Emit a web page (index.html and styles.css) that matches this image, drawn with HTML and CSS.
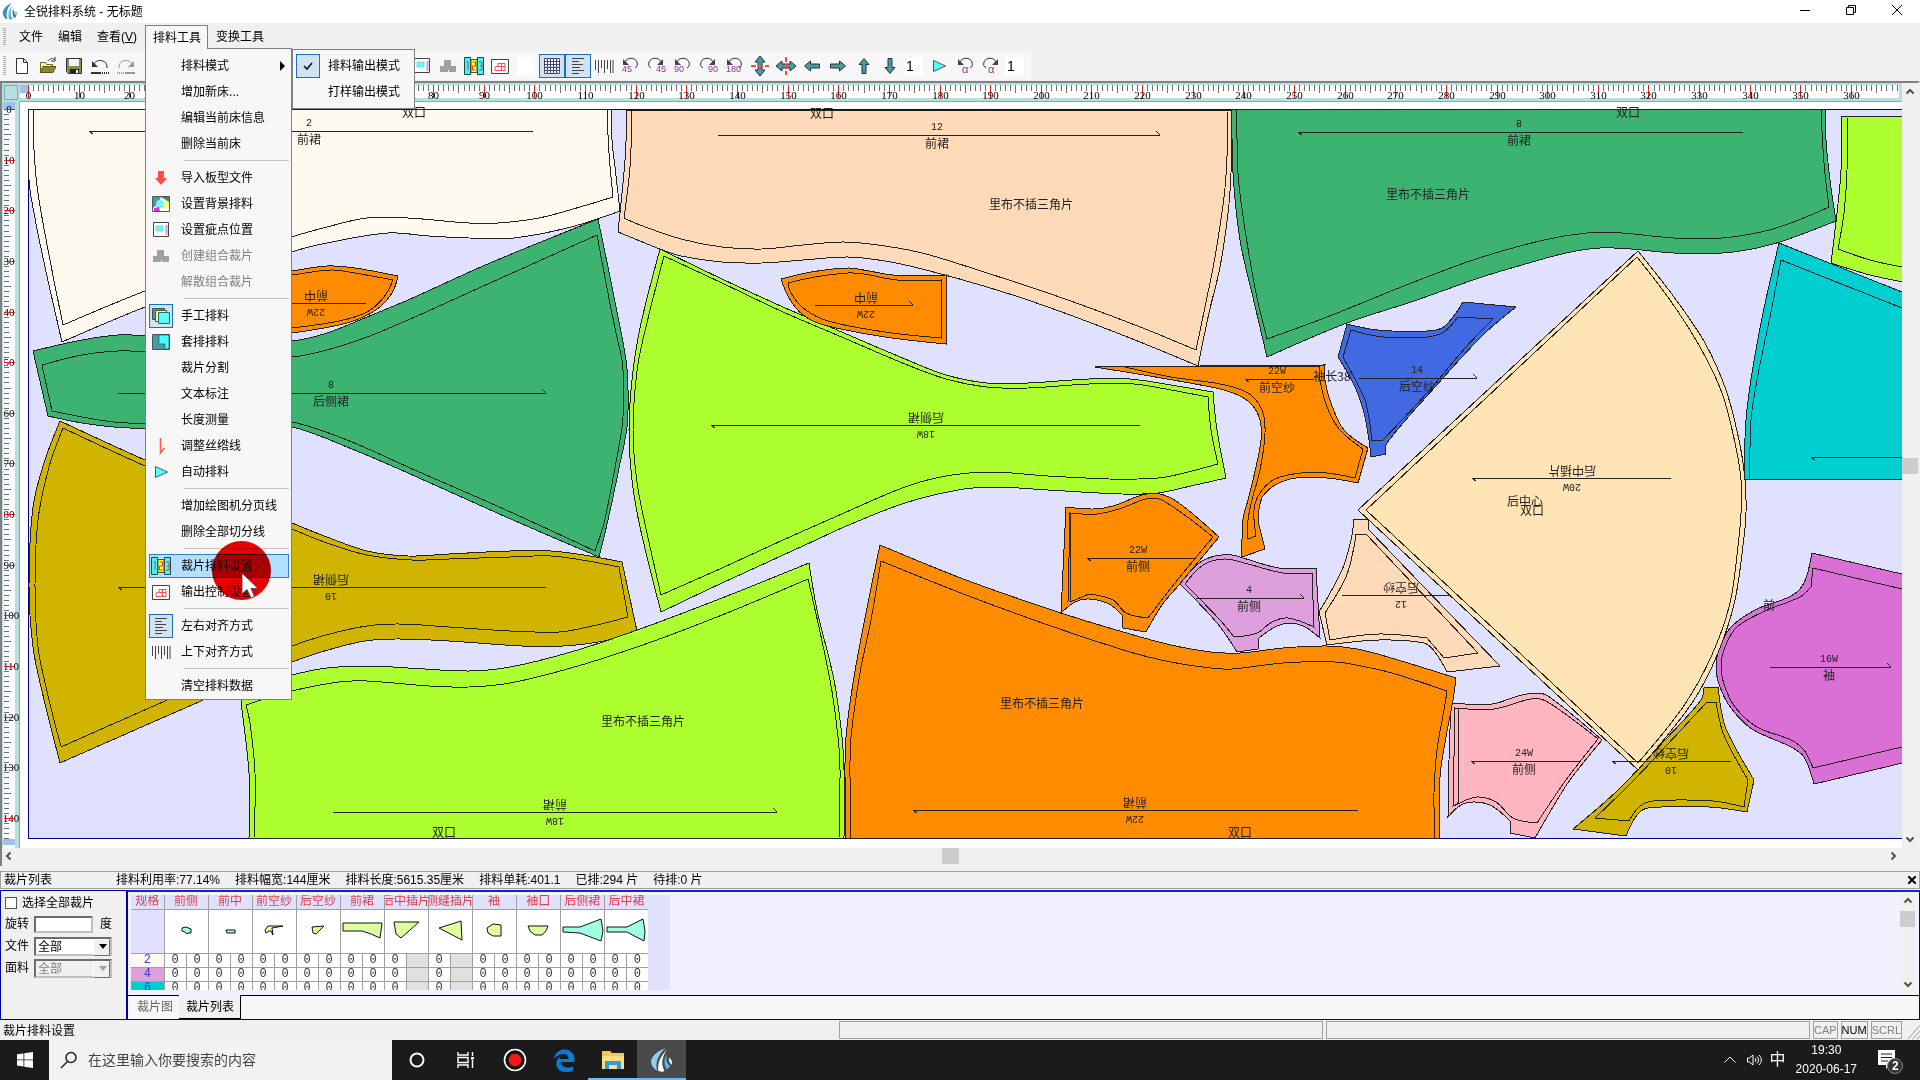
FILE: index.html
```html
<!doctype html>
<html lang="zh-CN">

<head>
    <meta charset="utf-8">
    <title>全锐排料系统 - 无标题</title>
    <link rel="stylesheet" href="styles.css">
</head>

<body>
    <!-- icon sprite -->
    <svg class="sprite" aria-hidden="true">
        <symbol id="i-logo" viewBox="0 0 18 20">
            <path d="M11 0C4 3 0 8 1 13c1 3 3 5 5 5C4 12 6 5 11 0z" fill="#3b8fc4" />
            <path d="M12 2C8 7 6 12 8 18c2 1 3 1 4 0C9 13 9 8 12 2z" fill="#5bb0dc" />
            <path d="M13 6c-2 4-1 8 1 11 1-1 2-2 2-3-2-2-3-5-3-8z" fill="#2a78b0" />
            <path d="M15 9c-1 2 0 3 2 5 1-2 0-4-2-5z" fill="#6ec1e4" />
        </symbol>
        <symbol id="i-new" viewBox="0 0 20 20"><path d="M4.500 2.500h7l4 4v11h-11zM11.500 2.500v4h4" fill="#fff" stroke="#333" /></symbol>
        <symbol id="i-open" viewBox="0 0 20 20">
            <path d="M2.500 16V6.500h5l1 2h6V11" fill="#ffff9c" stroke="#6b6b20" />
            <path d="M2 16.500l3-6h13l-3 6z" fill="#8a8a30" stroke="#55551a" />
            <path d="M10 5c2-3 5-3 7-1M17 1v4h-4" fill="none" stroke="#333" />
        </symbol>
        <symbol id="i-save" viewBox="0 0 20 20">
            <path d="M2.500 2.500h15v15h-13l-2-2z" fill="#8a8a55" stroke="#333" />
            <path d="M5 3h10v7H5z" fill="#f4f4f4" /><path d="M6 13h9v4H6z" fill="#222" /><path d="M12 14h2v3h-2z" fill="#fff" />
        </symbol>
        <symbol id="i-undo" viewBox="0 0 20 20">
            <path d="M4 8c2-5 12-5 13 2v2" fill="none" stroke="#333" /><path d="M2 5v6h6z" fill="#333" />
            <path d="M1 17h10" stroke="#333" stroke-width="2" /><path d="M12 17h8" stroke="#333" stroke-width="2" stroke-dasharray="1 1" />
        </symbol>
        <symbol id="i-redo" viewBox="0 0 20 20">
            <path d="M16 8C14 3 4 3 3 10v2" fill="none" stroke="#999" /><path d="M18 5v6h-6z" fill="#999" />
            <path d="M9 17h10" stroke="#999" stroke-width="2" /><path d="M1 17h8" stroke="#999" stroke-width="2" stroke-dasharray="1 1" />
        </symbol>
        <symbol id="i-down" viewBox="0 0 20 20"><path d="M7 3h6v7h3l-6 7-6-7h3z" fill="#ff4b4b" /></symbol>
        <symbol id="i-bg" viewBox="0 0 20 20">
            <path d="M1.500 2.500h17v15h-17z" fill="#fff" stroke="#555" /><path d="M2 3h8l-3 7-5 4z" fill="#4f9a90" />
            <path d="M10 3h8v5z" fill="#3c8f5c" /><circle cx="9" cy="10" r="4" fill="#6ff" /><path d="M12 8h6v6l-6 1z" fill="#ff8" />
            <path d="M3 14l5-1 1 4H3z" fill="#e22be2" />
        </symbol>
        <symbol id="i-flaw" viewBox="0 0 20 20">
            <path d="M2.500 2.500h15v14h-15z" fill="#fff" stroke="#444" /><path d="M5 6h7v5H5z" fill="#5ff" stroke="#9cc" />
            <path d="M15.500 5v10" stroke="#c39be0" stroke-width="2" />
        </symbol>
        <symbol id="i-group" viewBox="0 0 20 20"><path d="M6 4h7v6h5v6h-7v-2h-1v2H2v-6h4z" fill="#a0a0a0" /></symbol>
        <symbol id="i-hand" viewBox="0 0 20 20">
            <path d="M1.500 2.500h12v11h-12z" fill="#4f9a90" stroke="#355" /><path d="M4.500 4.500h11v11h-11z" fill="#ff9" stroke="#553" />
            <path d="M7.500 6.500h11v11h-11z" fill="#5ff" stroke="#2a6a6a" />
        </symbol>
        <symbol id="i-nest" viewBox="0 0 20 20">
            <path d="M1.500 2.500h17v15h-17z" fill="#4a9d9d" stroke="#456" /><path d="M8 3h10v14h-4v-5H8z" fill="#4ff" stroke="#244" stroke-width=".6" />
        </symbol>
        <symbol id="i-grain" viewBox="0 0 20 20"><path d="M9.500 2v15l4-5" fill="none" stroke="#ff5a5a" stroke-width="1.600" /></symbol>
        <symbol id="i-play" viewBox="0 0 20 20"><path d="M4.500 4.500v11l12-5.500z" fill="#5ff" stroke="#456" /></symbol>
        <symbol id="i-123" viewBox="0 0 20 20">
            <path d="M.5 1.500h6v17h-6zM13.500 1.500h6v17h-6z" fill="#3ff" stroke="#244" /><path d="M7 3.500h6v13H7z" fill="#ff3" stroke="#553" />
            <path d="M2.500 6l1.500-1v9M8.500 6h3v4h-3v4h3M15 6h3v8h-3M16 10h2" fill="none" stroke="#e33" />
        </symbol>
        <symbol id="i-output" viewBox="0 0 20 20">
            <path d="M1.500 3.500h17v14h-17z" fill="#fff" stroke="#444" />
            <path d="M5 14.500V11l3-1V7.500h7v7zM8 10.500h7M11.500 7.500v7" fill="none" stroke="#f05050" />
        </symbol>
        <symbol id="i-grid" viewBox="0 0 20 20"><path d="M2.500 2.500h15v15h-15zM5.500 2v16M8.500 2v16M11.500 2v16M14.500 2v16M2 5.500h16M2 8.500h16M2 11.500h16M2 14.500h16" fill="#fff" stroke="#447" /></symbol>
        <symbol id="i-left" viewBox="0 0 20 20"><path d="M4 2.500h12M4 5.500h7M4 8.500h11M4 11.500h8M4 14.500h12M4 17.500h7" stroke="#444" /></symbol>
        <symbol id="i-vert" viewBox="0 0 20 20"><path d="M1.500 4v10M4.500 4v13M7.500 4v8M10.500 4v13M13.500 4v9M16.500 4v13M19 4v13" stroke="#444" /></symbol>
        <symbol id="i-ccw" viewBox="0 0 20 20"><path d="M5 6c2-5 10-5 12 0 1 3 0 5-2 6" fill="none" stroke="#333" /><path d="M3 3v6h6z" fill="#444" /></symbol>
        <symbol id="i-cw" viewBox="0 0 20 20"><path d="M15 6C13 1 5 1 3 6c-1 3 0 5 2 6" fill="none" stroke="#333" /><path d="M17 3v6h-6z" fill="#444" /></symbol>
        <symbol id="i-flipv" viewBox="0 0 20 20"><path d="M10 0l5 6h-3v8h3l-5 6-5-6h3V6H5z" fill="#4f9a9a" stroke="#234" /><path d="M1 10h18" stroke="#f44" stroke-width="2" stroke-dasharray="5 2" /></symbol>
        <symbol id="i-fliph" viewBox="0 0 20 20"><path d="M0 10l6-5v3h8V5l6 5-6 5v-3H6v3z" fill="#4f9a9a" stroke="#234" /><path d="M10 1v18" stroke="#f44" stroke-width="2" stroke-dasharray="5 2" /></symbol>
        <symbol id="i-arrow" viewBox="0 0 20 20"><path d="M2.500 10l6-5v3h9v4h-9v3z" fill="#4f9a9a" stroke="#234" /></symbol>
        <symbol id="i-chev" viewBox="0 0 10 10"><path d="M1.500 6.500L5 3l3.500 3.500" fill="none" stroke="#505050" stroke-width="2" /></symbol>
    </svg>

    <header class="titlebar">
        <svg class="logo"><use href="#i-logo" /></svg>
        <span class="title">全锐排料系统 - 无标题</span>
        <button aria-label="最小化"><svg viewBox="0 0 10 10"><path d="M0 5.500h10" /></svg></button>
        <button aria-label="还原"><svg viewBox="0 0 10 10"><path d="M.5 2.500h7v7h-7zM2.500 2V.5h7v7H8" /></svg></button>
        <button aria-label="关闭"><svg viewBox="0 0 10 10"><path d="M0 0l10 10M10 0L0 10" /></svg></button>
    </header>

    <nav class="menubar">
        <i class="grip"></i>
        <div class="menu"><button>文件</button></div>
        <div class="menu"><button>编辑</button></div>
        <div class="menu"><button>查看(<u>V</u>)</button></div>
        <div class="menu open">
            <button>排料工具</button>
            <ul class="popup">
                <li><button>排料模式<i class="more"></i></button>
                    <ul class="popup sub">
                        <li><button><span class="ico on"><svg viewBox="0 0 20 20"><path d="M6 10l3 3 5-6" fill="none" stroke="#111" stroke-width="1.600" /></svg></span>排料输出模式</button></li>
                        <li><button>打样输出模式</button></li>
                    </ul>
                </li>
                <li><button>增加新床...</button></li>
                <li><button>编辑当前床信息</button></li>
                <li><button>删除当前床</button></li>
                <li class="sep"></li>
                <li><button><span class="ico"><svg><use href="#i-down" /></svg></span>导入板型文件</button></li>
                <li><button><span class="ico"><svg><use href="#i-bg" /></svg></span>设置背景排料</button></li>
                <li><button><span class="ico"><svg><use href="#i-flaw" /></svg></span>设置疵点位置</button></li>
                <li><button disabled><span class="ico"><svg><use href="#i-group" /></svg></span>创建组合裁片</button></li>
                <li><button disabled>解散组合裁片</button></li>
                <li class="sep"></li>
                <li><button><span class="ico on"><svg><use href="#i-hand" /></svg></span>手工排料</button></li>
                <li><button><span class="ico"><svg><use href="#i-nest" /></svg></span>套排排料</button></li>
                <li><button>裁片分割</button></li>
                <li><button>文本标注</button></li>
                <li><button>长度测量</button></li>
                <li><button><span class="ico"><svg><use href="#i-grain" /></svg></span>调整丝绺线</button></li>
                <li><button><span class="ico"><svg><use href="#i-play" /></svg></span>自动排料</button></li>
                <li class="sep"></li>
                <li><button>增加绘图机分页线</button></li>
                <li><button>删除全部切分线</button></li>
                <li class="sep"></li>
                <li><button class="hover"><span class="ico"><svg><use href="#i-123" /></svg></span>裁片排料设置</button></li>
                <li><button><span class="ico"><svg><use href="#i-output" /></svg></span>输出控制设置</button></li>
                <li class="sep"></li>
                <li><button><span class="ico on"><svg><use href="#i-left" /></svg></span>左右对齐方式</button></li>
                <li><button><span class="ico"><svg><use href="#i-vert" /></svg></span>上下对齐方式</button></li>
                <li class="sep"></li>
                <li><button>清空排料数据</button></li>
            </ul>
        </div>
        <div class="menu"><button>变换工具</button></div>
    </nav>

    <div class="toolrow">
        <div class="toolbar">
            <i class="grip"></i>
            <button aria-label="新建"><svg><use href="#i-new" /></svg></button>
            <button aria-label="打开"><svg><use href="#i-open" /></svg></button>
            <button aria-label="保存"><svg><use href="#i-save" /></svg></button>
            <button aria-label="撤销"><svg><use href="#i-undo" /></svg></button>
            <button aria-label="重做"><svg><use href="#i-redo" /></svg></button>
            <i class="gap"></i>
            <button aria-label="手工排料"><svg><use href="#i-hand" /></svg></button>
            <button aria-label="套排排料"><svg><use href="#i-nest" /></svg></button>
            <button aria-label="裁片分割"></button>
            <button aria-label="文本标注"></button>
            <button aria-label="长度测量"></button>
            <button aria-label="调整丝绺线"><svg><use href="#i-grain" /></svg></button>
            <button aria-label="自动排料"><svg><use href="#i-play" /></svg></button>
            <button aria-label="导入板型文件"><svg><use href="#i-down" /></svg></button>
            <button aria-label="设置背景排料"><svg><use href="#i-bg" /></svg></button>
            <button aria-label="解散组合裁片"></button>
            <button aria-label="设置疵点位置"><svg><use href="#i-flaw" /></svg></button>
            <button aria-label="创建组合裁片"><svg><use href="#i-group" /></svg></button>
            <button aria-label="裁片排料设置"><svg><use href="#i-123" /></svg></button>
            <button aria-label="输出控制设置"><svg><use href="#i-output" /></svg></button>
            <span class="blank"></span>
            <button class="on" aria-label="网格"><svg><use href="#i-grid" /></svg></button>
            <button class="on" aria-label="左右对齐"><svg><use href="#i-left" /></svg></button>
            <button aria-label="上下对齐"><svg><use href="#i-vert" /></svg></button>
            <button class="rot" aria-label="左转45度"><svg><use href="#i-ccw" /></svg><b>45</b></button>
            <button class="rot cw" aria-label="右转45度"><svg><use href="#i-cw" /></svg><b>45</b></button>
            <button class="rot" aria-label="左转90度"><svg><use href="#i-ccw" /></svg><b>90</b></button>
            <button class="rot cw" aria-label="右转90度"><svg><use href="#i-cw" /></svg><b>90</b></button>
            <button class="rot" aria-label="旋转180度"><svg><use href="#i-ccw" /></svg><b>180</b></button>
            <button aria-label="上下翻转"><svg><use href="#i-flipv" /></svg></button>
            <button aria-label="左右翻转"><svg><use href="#i-fliph" /></svg></button>
            <button aria-label="左移"><svg><use href="#i-arrow" /></svg></button>
            <button class="r" aria-label="右移"><svg><use href="#i-arrow" /></svg></button>
            <button class="u" aria-label="上移"><svg><use href="#i-arrow" /></svg></button>
            <button class="d" aria-label="下移"><svg><use href="#i-arrow" /></svg></button>
            <input value="1" aria-label="移动距离">
            <button aria-label="开始"><svg><use href="#i-play" /></svg></button>
            <button class="rot mid" aria-label="左转"><svg><use href="#i-ccw" /></svg><b>α</b></button>
            <button class="rot mid" aria-label="右转"><svg><use href="#i-cw" /></svg><b>α</b></button>
            <input value="1" aria-label="旋转角度">
        </div>
    </div>

    <main class="workspace">
        <div class="corner"></div>
        <svg class="ruler-x" id="rulerX"></svg>
        <svg class="ruler-y" id="rulerY"></svg>
        <div class="view"><svg id="marker"></svg></div>
        <div class="vbar"><svg><use href="#i-chev" /></svg><i></i><svg class="flip"><use href="#i-chev" /></svg></div>
        <div class="hbar"><svg class="left"><use href="#i-chev" /></svg><i></i><svg class="right"><use href="#i-chev" /></svg></div>
    </main>

    <div class="infobar">
        <span class="name">裁片列表</span>
        <span>排料利用率:77.14%</span>
        <span>排料幅宽:144厘米</span>
        <span>排料长度:5615.35厘米</span>
        <span>排料单耗:401.1</span>
        <span>已排:294 片</span>
        <span>待排:0 片</span>
        <button aria-label="关闭"><svg viewBox="0 0 8 8"><path d="M0 0l8 8M8 0L0 8" stroke="#000" stroke-width="2" /></svg></button>
    </div>

    <section class="panel">
        <form class="filters">
            <div class="all"><input type="checkbox" id="all"><label for="all">选择全部裁片</label></div>
            <div><label for="deg">旋转</label><input type="text" id="deg"><span>度</span></div>
            <div><label for="file">文件</label><span class="pick"><select id="file"><option>全部</option></select></span></div>
            <div><label for="cloth">面料</label><span class="pick off"><select id="cloth" disabled><option>全部</option></select></span></div>
        </form>
        <div class="pieces">
            <div class="list">
                <div class="sheet"><table id="sizes"></table></div>
                <div class="vbar"><svg><use href="#i-chev" /></svg><i></i><svg class="flip"><use href="#i-chev" /></svg></div>
            </div>
            <div class="tabs">
                <button>裁片图</button>
                <button class="active">裁片列表</button>
            </div>
        </div>
    </section>

    <footer class="status">
        <span class="msg">裁片排料设置</span>
        <span class="cell wide"></span>
        <span class="cell wide"></span>
        <span class="cell">CAP</span>
        <span class="cell num">NUM</span>
        <span class="cell">SCRL</span>
        <svg class="size-grip" viewBox="0 0 16 20"><path d="M3 20L16 5M8 20l8-9M13 20l3-4" stroke="#999" /></svg>
    </footer>

    <div class="taskbar">
        <button class="start" aria-label="开始"><svg viewBox="0 0 16 16"><path d="M0 2.300l6.500-.9v6.100H0zM7.300 1.300L16 0v7.500H7.300zM0 8.300h6.500v6.200L0 13.600zM7.300 8.300H16V16l-8.700-1.200z" fill="#fff" /></svg></button>
        <label class="search">
            <svg viewBox="0 0 18 18"><circle cx="11" cy="6.500" r="5" /><path d="M7.500 10.500L1 17" /></svg>
            <input type="text" placeholder="在这里输入你要搜索的内容" aria-label="搜索">
        </label>
        <button aria-label="Cortana"><svg viewBox="0 0 24 24"><circle cx="12" cy="12" r="6.500" fill="none" stroke="#fff" stroke-width="2" /></svg></button>
        <button aria-label="任务视图"><svg viewBox="0 0 24 24"><path d="M4 4v3h10V4M4 20v-3h10v3M4 9.500h10v5H4zM18.500 4v4M18.500 12v8" fill="none" stroke="#fff" stroke-width="1.400" /><path d="M17 9h3v2.500h-3z" fill="#fff" /></svg></button>
        <button aria-label="录屏"><svg viewBox="0 0 24 24"><circle cx="12" cy="12" r="10.500" fill="#111" stroke="#fff" stroke-width="1.600" /><circle cx="12" cy="12" r="6.500" fill="#f01818" /></svg></button>
        <button aria-label="Edge"><svg viewBox="0 0 24 24"><path d="M2 11C3 4 8 1.500 12.500 1.500 19 1.500 22.500 6 22.500 11v3H8.500c.2 4 4 5.500 7.500 5.500 2 0 4-.6 5-1.300v4.500c-2 1-4.500 1.600-7.500 1.300C7 24 3.500 19.500 4.500 14 5 11 7 9 9 8c-1 1-1.500 2-1.500 3h9c0-3.500-2-5-5-5C7.500 6 4 8 2 11z" fill="#0a7bd6" /></svg></button>
        <button class="running" aria-label="文件资源管理器"><svg viewBox="0 0 24 24"><path d="M1 3h8l2 2h12v16H1z" fill="#f5c84c" /><path d="M1 8h22v13H1z" fill="#ffdf80" /><path d="M4 21v-8h16v8h-4v-4H8v4z" fill="#3a96dd" /></svg></button>
        <button class="running active" aria-label="全锐排料系统"><svg viewBox="0 0 18 20"><path d="M12 0C4 3-1 8 0 13c1 3 3 5 5 6C3 12 6 5 12 0z" fill="#8fd0f5" /><path d="M13 1C8 7 5 12 6 19c2 1 4 1 5 0C8 13 9 8 13 1z" fill="#fff" /><path d="M13 5c-3 5-2 10 0 13 1-1 2-2 3-3-3-2-4-5-3-10z" fill="#5bb8ea" /><path d="M15 8c-1 2 0 4 2 6 1-2 0-4-2-6z" fill="#e4f5ff" /></svg></button>
        <div class="tray">
            <svg viewBox="0 0 16 16"><path d="M2.500 10.500L8 5l5.500 5.500" /></svg>
            <svg viewBox="0 0 16 16"><path d="M1.500 6v4h2L7 13V3L3.500 6zM9 6c1 1 1 3 0 4M11 4.500c2 2 2 5 0 7M13 3c3 3 3 7 0 10" /></svg>
            <span class="ime">中</span>
            <div class="clock"><time>19:30</time><time>2020-06-17</time></div>
            <button class="notes" aria-label="通知"><svg viewBox="0 0 28 28"><path d="M3 4h17v15h-6l-3 4v-4H3z" fill="#fff" /><path d="M6 8h11M6 11.500h11M6 15h7" stroke="#1b1b1b" /><circle cx="20" cy="20" r="7.500" fill="#333" stroke="#888" /></svg><b>2</b></button>
        </div>
    </div>

    <div class="click-spot"></div>
    <svg class="cursor" viewBox="0 0 18 27"><path d="M1 1v21l5-4.500 4 8.500 3.500-1.500L10 16.500h7z" fill="#fff" stroke="#533" stroke-width=".8" /></svg>

    <script src="main.js"></script>
</body>

</html>
```

FILE: styles.css
```css
* {
    box-sizing: border-box;
}

body {
    margin: 0;
    height: 100vh;
    display: flex;
    flex-direction: column;
    overflow: hidden;
    background: #f0f0f0;
    color: #000;
    font: 12px/16px "Liberation Sans", "Noto Sans CJK SC", sans-serif;
}

button,
input,
select {
    font: inherit;
    color: inherit;
    margin: 0;
    padding: 0;
    border: 0;
    background: none;
    border-radius: 0;
}

ul {
    list-style: none;
    margin: 0;
    padding: 0;
}

.sprite {
    display: none;
}

/* title bar */
.titlebar {
    display: flex;
    align-items: center;
    height: 23px;
    flex: none;
    background: #fff;
    padding-left: 2px;
}

.logo {
    width: 16px;
    height: 18px;
}

.title {
    flex: 1;
    margin-left: 6px;
}

.titlebar button {
    width: 46px;
    height: 21px;
    margin-bottom: 2px;
}

.titlebar button svg {
    width: 10px;
    height: 10px;
    fill: none;
    stroke: #000;
}

/* menu bar */
.menubar {
    display: flex;
    height: 28px;
    flex: none;
    padding: 2px 0 0 3px;
}

.grip {
    width: 3px;
    height: 18px;
    margin: 3px 5px 0 0;
    background: repeating-linear-gradient(#aaa 0 1px, transparent 1px 2px);
}

.menu {
    position: relative;
}

.menu > button {
    height: 24px;
    padding: 0 7px 0 8px;
}

.menu.open {
    margin-left: 1px;
}

.menu.open > button {
    position: relative;
    z-index: 3;
    background: #f7f7f7;
    border: 1px solid #808080;
    border-bottom: 0;
    padding: 0 6px 0 7px;
}

.popup {
    position: absolute;
    z-index: 2;
    left: 0;
    top: 23px;
    width: 147px;
    padding: 4px 2px 0;
    background: #f7f7f7;
    border: 1px solid #808080;
}

.popup.sub {
    left: 144px;
    top: -4px;
    width: 123px;
    padding: 3px 2px;
}

.popup li {
    position: relative;
    padding: 1px 0 1px 1px;
}

.popup li > button {
    display: flex;
    align-items: center;
    width: 140px;
    height: 24px;
    padding-left: 32px;
    white-space: nowrap;
}

.popup.sub li > button {
    width: 115px;
}

.popup button:disabled {
    color: #808080;
}

.popup .hover {
    background: #b3e0ff;
    outline: 1px solid #3080c8;
    outline-offset: -1px;
}

.popup .sep {
    height: 8px;
    padding: 3px 0;
}

.popup .sep::before {
    content: "";
    display: block;
    height: 1px;
    margin-left: 36px;
    background: #c4c4c4;
}

.ico {
    display: grid;
    place-items: center;
    width: 24px;
    height: 24px;
    margin: 0 8px 0 -32px;
}

.ico svg {
    width: 20px;
    height: 20px;
}

.on {
    background: #cfe3f3;
    outline: 1px solid #1d70c0;
    outline-offset: -1px;
}

.more {
    margin-left: auto;
    margin-right: 4px;
    border: 5px solid transparent;
    border-left-color: #000;
    border-right: 0;
}

/* toolbar */
.toolrow {
    height: 30px;
    flex: none;
}

.toolbar {
    display: flex;
    align-items: center;
    width: fit-content;
    height: 29px;
    padding: 0 4px 0 3px;
    background: #f7f7f7;
}

.toolbar .grip {
    height: 20px;
    margin: 0 3px 0 0;
}

.toolbar button,
.blank {
    display: grid;
    place-items: center;
    position: relative;
    flex: none;
    width: 26px;
    height: 24px;
}

.blank::before {
    content: "";
    width: 18px;
    height: 18px;
    background: #fff;
}

.gap {
    width: 10px;
}

.toolbar svg {
    width: 20px;
    height: 20px;
}

.toolbar input {
    width: 19px;
    height: 18px;
    margin: 0 3px 0 1px;
    padding-left: 2px;
    background: #fff;
    font-size: 14px;
}

.rot b {
    position: absolute;
    left: 5px;
    bottom: 4px;
    color: #953095;
    font: 9px/9px "Liberation Sans", sans-serif;
}

.rot.cw b {
    left: auto;
    right: 3px;
}

.rot.mid b {
    left: 10px;
    font-size: 11px;
}

.r svg {
    transform: scaleX(-1);
}

.u svg {
    transform: rotate(90deg);
}

.d svg {
    transform: rotate(-90deg);
}

/* marker area */
.workspace {
    flex: 1;
    min-height: 0;
    display: grid;
    grid-template-columns: 18px 1fr 16px;
    grid-template-rows: 19px 1fr 18px;
    border: 2px solid #808080;
    border-right-color: #f0f0f0;
    border-bottom: 0;
}

.corner {
    background: #b8e0e0;
    border: 2px solid #b8e0e0;
    box-shadow: inset 0 0 0 1px #6fb3b3;
}

.ruler-x,
.ruler-y {
    width: 100%;
    height: 100%;
    min-height: 0;
    background: #b8e0e0;
}

.view {
    min-width: 0;
    min-height: 0;
    background: #fff;
    grid-column: 2;
}

.view svg {
    display: block;
    width: 100%;
    height: 100%;
}

.workspace .vbar {
    grid-column: 3;
    grid-row: 1 / 3;
}

.hbar {
    grid-column: 1 / 4;
    display: flex;
    align-items: center;
    padding: 0 20px 2px 2px;
}

.hbar i {
    width: 17px;
    height: 16px;
    margin-left: 49%;
    background: #cdcdcd;
}

.hbar .right {
    margin-left: auto;
    transform: rotate(90deg);
}

.hbar .left {
    transform: rotate(-90deg);
}

.hbar svg,
.vbar svg {
    width: 10px;
    height: 10px;
    flex: none;
}

.vbar {
    display: flex;
    flex-direction: column;
    align-items: center;
    justify-content: space-between;
    padding: 4px 0;
    background: #f0f0f0;
}

.vbar i {
    width: 100%;
    height: 16px;
    background: #cdcdcd;
}

.vbar .flip {
    transform: scaleY(-1);
}

.piece,
.seam,
.grainline,
.frame {
    fill: none;
    stroke: #222;
    shape-rendering: crispEdges;
}

.frame {
    fill: #e0e0ff;
    stroke: #00008b;
}

#marker text {
    fill: #222;
    font: 12px "Noto Sans CJK SC", sans-serif;
    text-anchor: middle;
    dominant-baseline: central;
}

#marker .size {
    font: 10px "Liberation Mono", monospace;
}

.ruler-x text,
.ruler-y text {
    font: 11px "Liberation Serif", serif;
    text-anchor: middle;
}

.tick {
    stroke: #707070;
    shape-rendering: crispEdges;
}

.ten {
    stroke: #e02020;
    shape-rendering: crispEdges;
}

/* info bar */
.infobar {
    display: flex;
    align-items: center;
    gap: 15px;
    height: 18px;
    flex: none;
    margin: 5px 0 1px;
    padding: 0 3px;
    border: 1px solid #a0a0a0;
}

.infobar .name {
    width: 97px;
}

.infobar button {
    margin-left: auto;
    display: flex;
}

.infobar svg {
    width: 8px;
    height: 8px;
}

/* bottom panel */
.panel {
    display: flex;
    height: 130px;
    flex: none;
}

.filters {
    width: 127px;
    padding: 2px 4px;
    border: 1px solid #0000a0;
    display: grid;
    grid-template-rows: 20px 22px 22px 22px;
    align-items: center;
}

.filters div {
    display: flex;
    align-items: center;
    gap: 5px;
}

.filters input[type="text"] {
    width: 59px;
    height: 17px;
    background: #fff;
    border: 2px inset #c0c0c0;
    margin-right: 2px;
}

.filters input[type="checkbox"] {
    appearance: none;
    width: 12px;
    height: 12px;
    background: #fff;
    border: 1px solid #555;
}

.pick {
    position: relative;
}

.pick select {
    appearance: none;
    display: block;
    width: 78px;
    height: 19px;
    padding: 0 2px;
    background: #fff;
    border: 2px inset #c0c0c0;
}

.pick.off select {
    background: #f0f0f0;
    color: #808080;
    opacity: 1;
}

/* raised drop button with its triangle */
.pick::after {
    content: "";
    position: absolute;
    right: 2px;
    top: 2px;
    width: 15px;
    height: 15px;
    background: #f0f0f0;
    border: 1px solid;
    border-color: #fff #707070 #707070 #fff;
    pointer-events: none;
}

.pick::before {
    content: "";
    position: absolute;
    z-index: 1;
    right: 5px;
    top: 7px;
    border: 4px solid transparent;
    border-top: 5px solid #000;
    border-bottom: 0;
    pointer-events: none;
}

.pick.off::before {
    border-top-color: #a0a0a0;
}

.pieces {
    flex: 1;
    min-width: 0;
    display: flex;
    flex-direction: column;
    border: 1px solid #0000a0;
    border-top: 2px solid #2020c0;
}

.list {
    display: flex;
    justify-content: space-between;
    height: 103px;
    padding: 0 4px 2px 3px;
    background: #f0f0ff;
}

.list .vbar {
    width: 15px;
    justify-content: flex-start;
}

.list .vbar i {
    margin-top: 5px;
}

.list .vbar .flip {
    margin-top: auto;
}

.sheet {
    margin-top: 3px;
    height: 95px;
    padding-right: 22px;
    overflow: hidden;
    background: #e0e0ff;
}

table {
    border-collapse: collapse;
    table-layout: fixed;
    width: 517px;
}

th,
td {
    border: 1px solid #a0a0a0;
    padding: 0;
    text-align: center;
    font-weight: normal;
    background: #fff;
    overflow: hidden;
    height: 14px;
    line-height: 13px;
    color: #333;
}

tr > :first-child {
    border-left: 0;
}

tr > :last-child {
    border-right: 0;
}

thead th {
    background: #e0e0ff;
    color: #e04048;
    border-top: 0;
    white-space: nowrap;
}

thead th span {
    display: flex;
    justify-content: center;
}

.thumb,
.thumb-head {
    height: 44px;
}

.thumb-head {
    background: #e0e0ff;
}

.thumb svg {
    display: block;
    width: 43px;
    height: 43px;
    stroke: #111;
}

.none {
    background: #e0e0e0;
}

tbody th {
    color: #3838e0;
}

tbody td,
tbody th {
    font-family: "Liberation Mono", monospace;
}

.tabs {
    flex: 1;
    display: flex;
    border-top: 1px solid #000;
    background: #f7f7f7;
    padding-left: 2px;
}

.tabs button {
    height: 24px;
    padding: 0 6px 0 7px;
    margin-top: -1px;
    color: #666;
}

.tabs .active {
    color: #000;
    background: #f0f0f0;
    border: solid #000;
    border-width: 0 1px 1px 0;
}

/* status bar */
.status {
    display: flex;
    align-items: center;
    gap: 3px;
    height: 20px;
    flex: none;
}

.msg {
    flex: 1;
    padding: 2px 0 0 3px;
}

.cell {
    height: 18px;
    border: 1px solid #a0a0a0;
    color: #808080;
    font-size: 11px;
}

.cell.wide {
    width: 484px;
}

.cell.num {
    color: #000;
}

.size-grip {
    width: 15px;
    height: 20px;
}

/* taskbar */
.taskbar {
    display: flex;
    height: 40px;
    flex: none;
    background: #1b1b1b;
    color: #fff;
}

.taskbar > button {
    display: grid;
    place-items: center;
    width: 49px;
}

.taskbar > button svg {
    width: 24px;
    height: 24px;
}

.taskbar .start svg {
    width: 16px;
    height: 16px;
}

.search {
    display: flex;
    align-items: center;
    width: 343px;
    padding-left: 11px;
    gap: 10px;
    background: #f2f2f2;
}

.search svg {
    width: 18px;
    height: 18px;
    fill: none;
    stroke: #222;
    stroke-width: 1.500;
}

.search input {
    flex: 1;
    font-size: 14px;
    color: #333;
}

.search input::placeholder {
    color: #444;
    opacity: 1;
}

.running {
    box-shadow: inset 0 -2px #76b9ed;
}

.taskbar .active {
    background: #4a4a4a;
}

.tray {
    margin-left: auto;
    display: flex;
    align-items: center;
    gap: 8px;
    padding-right: 17px;
}

.tray > svg {
    width: 16px;
    height: 16px;
    fill: none;
    stroke: #fff;
}

.ime {
    font-size: 16px;
}

.clock {
    display: flex;
    flex-direction: column;
    align-items: center;
    line-height: 19px;
    margin-left: 2px;
}

.notes {
    position: relative;
    display: flex;
    margin-left: 10px;
}

.notes svg {
    width: 28px;
    height: 28px;
}

.notes b {
    position: absolute;
    left: 17px;
    top: 12px;
}

/* mouse highlight */
.click-spot {
    position: absolute;
    z-index: 10;
    left: 212px;
    top: 541px;
    width: 59px;
    height: 59px;
    border-radius: 50%;
    background: #f00000;
    mix-blend-mode: multiply;
    pointer-events: none;
}

.cursor {
    position: absolute;
    z-index: 11;
    left: 241px;
    top: 572px;
    width: 18px;
    height: 27px;
    pointer-events: none;
}
```

FILE: main.js
```js
var NS = 'http://www.w3.org/2000/svg';
var UNIT = 5.064; // pixels per centimetre
var OX = 20, OY = 102; // window position of the view's corner

function el(parent, tag, attrs, text) {
    var e = document.createElementNS(NS, tag);
    for (var k in attrs) e.setAttribute(k, attrs[k]);
    if (text !== undefined) e.textContent = text;
    parent.appendChild(e);
    return e;
}

// ---- rulers ----
function rulers() {
    var rx = document.getElementById('rulerX');
    var ry = document.getElementById('rulerY');
    var w = rx.clientWidth - 3, h = ry.clientHeight;
    var i, p, len;
    el(rx, 'rect', { x: 0, y: 2, width: w, height: 13, fill: '#fff' });
    el(rx, 'rect', { x: 0, y: 2, width: 8, height: 8, fill: '#9fc0f0' });
    el(rx, 'path', { d: 'M0 18.5H4000', stroke: '#6fb3b3' });
    for (i = 0; 8 + i * UNIT < w; i++) {
        p = Math.round(8 + i * UNIT) + 0.5;
        len = i % 5 ? 6 : 8;
        el(rx, 'path', { 'class': i % 10 ? 'tick' : 'ten', d: 'M' + p + ' 2v' + (i % 10 ? len : 13) });
        if (i % 10 == 0) el(rx, 'text', { x: p, y: 16 }, i);
    }
    el(ry, 'rect', { x: 1, y: 0, width: 12, height: h, fill: '#fff' });
    el(ry, 'rect', { x: 1, y: 0, width: 12, height: 7, fill: '#9fc0f0' });
    el(ry, 'rect', { x: 1, y: 737, width: 12, height: 6, fill: '#9fc0f0' });
    el(ry, 'path', { d: 'M17.5 0V2000', stroke: '#6fb3b3' });
    for (i = 0; i <= 144; i++) {
        p = Math.round(7 + i * UNIT) + 0.5;
        if (i % 10 == 0) el(ry, 'text', { x: i > 99 ? 9 : 7, y: p + 3 }, i);
        el(ry, 'path', { 'class': i % 10 ? 'tick' : 'ten', d: 'M1.5 ' + p + 'h' + (i % 10 ? (i % 5 ? 5 : 7) : 11) });
    }
}

// ---- pattern pieces ----
// line: [x1, x2, y, arrow side], label: [size, name, x], rot: turned by 180
var ORANGE = '#ff8c00', GREEN = '#3cb371', LIME = '#adff2f', OLIVE = '#d0b400', PEACH = '#ffdab9';
var pieces = [
    { fill: '#fffaf0', line: [89, 533, 131, 'l'], label: ['2', '前裙', 309],
      cut: '29,109 29,180 34,213 45,267 62,342 145,307 292,252 327,243 388,233 429,236 469,238 514,238 571,227 620,211 615,167 612,140 612,109',
      seam: '34,109 34,150 39,200 63,325 145,291 292,237 327,227 367,218 408,218 469,223 498,223 539,218 580,207 613,197 609,153 607,109' },
    { fill: PEACH, line: [718, 1160, 135, 'r'], label: ['12', '前裙', 937],
      cut: '627,110 625,160 618,232 640,241 660,249 681,256 722,262 762,263 803,260 848,257 885,261 926,270 987,287 1048,307 1130,338 1198,366 1209,313 1220,267 1228,213 1231,173 1232,110',
      seam: '632,110 630,167 624,218 640,225 681,239 722,247 762,249 803,245 844,242 885,246 926,254 987,273 1048,293 1130,323 1196,350 1205,307 1215,257 1224,197 1227,157 1227,110' },
    { fill: GREEN, line: [1298, 1743, 132, 'l'], label: ['8', '前裙', 1519],
      cut: '1232,109 1233,173 1240,240 1252,293 1267,357 1347,323 1414,301 1479,278 1522,265 1566,253 1600,248 1631,249 1674,253 1722,253 1752,249 1783,241 1836,221 1830,180 1826,140 1826,109',
      seam: '1237,109 1238,173 1244,223 1256,293 1267,339 1327,317 1414,282 1479,258 1544,240 1587,233 1622,233 1674,238 1722,238 1761,232 1791,223 1829,207 1824,163 1821,109' },
    { fill: LIME,
      cut: '1842,116 1920,116 1920,288 1902,282 1870,275 1831,263 1837,213 1841,170',
      seam: '1847,116 1930,116 1930,273 1902,267 1870,260 1838,249 1844,213 1847,170' },
    { fill: GREEN, line: [118, 546, 393, 'r'], label: ['8', '后侧裙', 331],
      cut: '33,351 82,340 118,335 145,336 220,345 292,341 327,333 367,317 408,300 490,263 598,219 608,267 618,317 626,360 628,390 627,427 618,473 608,520 599,557 506,517 408,473 347,447 292,427 220,420 145,428 114,427 82,423 48,416',
      seam: '42,365 82,355 118,351 145,352 220,360 292,357 327,350 367,337 408,320 490,283 597,235 606,283 616,333 622,360 624,390 622,427 614,473 604,523 595,551 506,510 408,467 347,440 292,422 220,415 145,423 114,422 82,417 52,411' },
    { fill: OLIVE, line: [118, 546, 587, 'l'], label: ['10', '后侧裙', 331], rot: true,
      cut: '60,421 145,460 292,523 327,537 367,551 408,556 449,554 510,551 551,551 584,555 622,562 637,631 604,641 563,646 522,646 449,641 396,639 359,642 292,662 201,701 60,763 41,687 33,647 29,587 33,507 45,460',
      seam: '63,428 145,466 292,529 327,543 367,555 412,560 449,559 510,557 551,556 588,561 619,567 628,617 588,627 559,632 510,631 449,627 396,624 355,628 292,646 165,701 61,747 46,687 38,647 35,587 38,520 49,467' },
    { fill: ORANGE, line: [270, 366, 303], label: ['22W', '前中', 316], rot: true,
      cut: '245,277 292,271 327,266 355,268 398,276 392,293 376,310 347,323 292,333 245,337',
      seam: '250,280 292,275 331,270 355,273 393,280 384,297 367,312 339,321 292,328 250,332' },
    { fill: LIME, line: [711, 1140, 425, 'l'], label: ['18W', '后侧裙', 926], rot: true,
      cut: '660,249 722,279 783,307 844,333 905,359 946,375 987,383 1028,383 1089,379 1130,379 1171,385 1213,392 1217,430 1226,478 1191,486 1158,493 1122,494 1048,490 995,487 958,490 905,503 844,527 816,540 722,583 661,612 640,527 632,480 629,430 632,380 640,328',
      seam: '664,256 722,283 783,312 844,338 905,364 946,379 987,387 1028,388 1089,384 1134,384 1171,390 1208,397 1211,430 1218,464 1166,477 1138,479 1109,479 1048,476 991,472 946,476 905,487 844,513 783,540 722,568 661,595 640,500 635,465 633,430 635,390 640,353' },
    { fill: ORANGE, line: [815, 913, 305, 'r'], label: ['22W', '前中', 866], rot: true,
      cut: '781,279 811,272 848,268 869,271 893,275 946,275 946,344 885,337 824,325 803,315 789,298',
      seam: '788,283 815,277 848,273 864,274 897,280 941,280 941,338 885,332 828,321 803,308 791,293' },
    { fill: ORANGE, line: [1245, 1314, 379, 'l'], label: ['22W', '前空纱', 1277],
      cut: '1095,367 1200,366 1325,365 1325,380 1331,403 1344,430 1368,448 1358,483 1327,478 1296,478 1275,485 1262,497 1258,517 1262,537 1265,549 1242,557 1243,519 1248,500 1256,467 1261,440 1260,420 1252,405 1238,395 1211,387',
      seam: '1125,367 1171,377 1220,384 1248,393 1262,410 1265,433 1260,470 1252,500 1248,520 1248,539 1256,536 1254,510 1260,493 1275,479 1301,473 1327,473 1355,478 1363,449 1340,430 1327,407 1320,380 1319,366' },
    { fill: '#4169e1', line: [1359, 1477, 378, 'r'], label: ['14', '后空纱', 1417],
      cut: '1347,324 1370,329 1392,331 1427,331 1442,328 1453,317 1463,302 1516,307 1483,335 1435,387 1387,443 1386,454 1371,457 1369,440 1364,413 1355,387 1338,357',
      seam: '1351,330 1383,337 1427,337 1444,332 1458,317 1493,319 1466,347 1427,393 1383,440 1372,441 1366,403 1357,383 1343,357' },
    { fill: '#00ced1', line: [1811, 1990, 457, 'l'],
      cut: '1779,243 1902,292 1930,303 1930,479 1744,479 1746,420 1752,373 1763,313',
      seam: '1781,260 1902,308 1930,319 1930,479 1750,479 1751,420 1757,380 1772,307' },
    { fill: '#da70d6', line: [1770, 1891, 667, 'r'], label: ['16W', '袖', 1829],
      cut: '1812,553 1902,574 1930,580 1930,755 1902,763 1814,784 1804,757 1791,747 1752,729 1731,708 1720,687 1716,667 1720,647 1731,627 1757,609 1791,596 1804,583',
      seam: '1813,568 1902,589 1930,595 1930,741 1902,747 1813,768 1804,750 1791,740 1757,727 1735,707 1725,687 1721,667 1725,647 1737,627 1765,611 1800,597 1811,587' },
    { fill: OLIVE, line: [1612, 1731, 761, 'l'], label: ['10', '后空纱', 1671], rot: true,
      cut: '1704,688 1718,687 1724,723 1735,747 1754,780 1747,812 1709,807 1648,808 1637,815 1626,836 1573,829 1618,790 1665,740 1701,700',
      seam: '1707,702 1716,702 1722,730 1731,750 1748,780 1744,807 1713,801 1653,801 1639,807 1629,821 1595,818 1631,783 1667,745' },
    { fill: '#ffb6c1', line: [1471, 1581, 761, 'l'], label: ['24W', '前侧', 1524],
      cut: '1451,703 1492,704 1518,696 1535,693 1548,696 1602,740 1570,780 1553,807 1535,838 1510,833 1510,821 1492,806 1475,802 1461,805 1448,817 1449,760',
      seam: '1455,708 1494,709 1531,699 1546,701 1598,739 1566,780 1537,823 1513,818 1496,802 1477,797 1458,804 1459,708 1458,804 1453,806' },
    { fill: '#ffe4b5', line: [1472, 1671, 478, 'l'], label: ['20W', '后中插片', 1572], rot: true,
      cut: '1638,251 1674,297 1705,343 1726,390 1739,440 1745,480 1746,513 1744,537 1735,600 1718,653 1692,703 1638,770 1358,510',
      seam: '1637,257 1670,300 1700,347 1722,393 1735,443 1741,480 1741,513 1739,537 1730,603 1711,657 1683,707 1638,763 1366,510' },
    { fill: PEACH, line: [1342, 1450, 595], label: ['12', '后空纱', 1401], rot: true,
      cut: '1354,519 1368,519 1369,530 1500,666 1447,672 1435,652 1424,643 1379,640 1327,645 1319,612 1342,570 1351,540',
      seam: '1356,534 1366,534 1478,653 1444,658 1427,638 1379,634 1330,640 1325,613 1346,577 1354,547' },
    { fill: '#dda0dd', line: [1196, 1304, 598, 'r'], label: ['4', '前侧', 1249],
      cut: '1180,584 1199,563 1215,556 1232,555 1243,558 1279,568 1316,568 1320,638 1305,627 1290,623 1275,627 1259,638 1258,649 1237,652 1217,623',
      seam: '1185,584 1203,565 1224,559 1248,564 1283,573 1312,573 1314,627 1288,618 1272,622 1257,633 1234,637 1220,620' },
    { fill: LIME, line: [333, 777, 812, 'r'], label: ['18W', '前裙', 555], rot: true,
      cut: '241,690 292,675 327,668 371,666 408,668 469,671 510,667 571,652 640,629 722,598 809,563 817,610 834,680 842,737 844,770 844,838 249,838 249,773 241,700',
      seam: '246,705 292,691 339,682 367,681 429,686 469,687 510,683 571,668 640,646 722,615 808,579 830,680 838,737 840,770 839,838 254,838 255,773 250,723' },
    { fill: ORANGE, line: [913, 1358, 810, 'l'], label: ['22W', '前裙', 1135], rot: true,
      cut: '880,545 966,580 1061,613 1130,634 1171,645 1211,652 1240,653 1283,648 1327,646 1357,649 1388,657 1456,678 1453,700 1446,737 1440,777 1440,838 846,838 845,777 846,737 854,677 868,603',
      seam: '881,561 966,595 1048,625 1130,652 1171,662 1211,668 1232,669 1283,663 1335,662 1361,666 1392,673 1447,691 1444,710 1437,750 1434,793 1435,838 851,838 850,777 851,737 860,673 871,620' },
    { fill: ORANGE, line: [1087, 1194, 558, 'l'], label: ['22W', '前侧', 1138],
      cut: '1066,507 1093,509 1113,506 1142,495 1160,494 1179,503 1219,537 1179,585 1162,605 1146,632 1123,628 1122,615 1109,604 1089,599 1075,602 1061,613',
      seam: '1070,513 1097,514 1122,508 1146,499 1162,500 1213,537 1175,583 1148,618 1126,613 1113,600 1089,594 1070,602 1070,513 1068,602' }
];

var notes = [
    ['双口', 414, 112], ['双口', 822, 113], ['双口', 1628, 112], ['双口', 444, 832], ['双口', 1240, 832],
    ['里布不插三角片', 1031, 204], ['里布不插三角片', 1428, 194], ['里布不插三角片', 643, 721], ['里布不插三角片', 1042, 703],
    ['袖长38', 1332, 376], ['后中心', 1525, 501], ['双口', 1532, 510], ['前', 1769, 605]
];

// round the gentle bends, keep the real corners sharp
function outline(str) {
    var p = str.split(' ').map(function (s) { return s.split(',').map(Number); });
    var n = p.length;
    function tangent(i) {
        var a = p[(i + n - 1) % n], b = p[i], c = p[(i + 1) % n];
        var t = Math.atan2(c[1] - b[1], c[0] - b[0]) - Math.atan2(b[1] - a[1], b[0] - a[0]);
        t = Math.abs(Math.atan2(Math.sin(t), Math.cos(t)));
        if (t > 0.62) return [0, 0];
        var d = Math.hypot(c[0] - a[0], c[1] - a[1]);
        return [(c[0] - a[0]) / d, (c[1] - a[1]) / d];
    }
    var s = 'M' + p[0];
    for (var i = 0; i < n; i++) {
        var a = p[i], b = p[(i + 1) % n], ta = tangent(i), tb = tangent((i + 1) % n);
        var k = Math.hypot(b[0] - a[0], b[1] - a[1]) / 3;
        s += 'C' + [a[0] + ta[0] * k, a[1] + ta[1] * k, b[0] - tb[0] * k, b[1] - tb[1] * k, b[0], b[1]].map(function (v) { return v.toFixed(1); }).join(' ');
    }
    return s + 'Z';
}

function label(g, text, x, y, rot, cls) {
    var a = { x: x, y: y };
    if (cls) a['class'] = cls;
    if (rot) a.transform = 'rotate(180 ' + x + ' ' + y + ')';
    el(g, 'text', a, text);
}

function drawMarker() {
    var g = el(document.getElementById('marker'), 'g', { transform: 'translate(' + -OX + ' ' + -OY + ')' });
    el(g, 'rect', { 'class': 'frame', x: 28.5, y: 109.5, width: 4000, height: 729 });
    pieces.forEach(function (p) {
        el(g, 'path', { 'class': 'piece', d: outline(p.cut), style: 'fill:' + p.fill });
        el(g, 'path', { 'class': 'seam', d: outline(p.seam) });
    });
    pieces.forEach(function (p) {
        var l = p.line;
        if (!l) return;
        var d = 'M' + l[0] + ' ' + (l[2] + 0.5) + 'H' + l[1];
        if (l[3] == 'l') d += 'M' + l[0] + ' ' + l[2] + 'l4 3';
        if (l[3] == 'r') d += 'M' + l[1] + ' ' + l[2] + 'l-4 -4';
        el(g, 'path', { 'class': 'grainline', d: d });
        if (!p.label) return;
        label(g, p.label[0], p.label[2], l[2] + (p.rot ? 8 : -8), p.rot, 'size');
        label(g, p.label[1], p.label[2], l[2] + (p.rot ? -7 : 7), p.rot);
    });
    notes.forEach(function (t) { label(g, t[0], t[1], t[2] - 1); });
}

// ---- size table ----
var cols = [
    ['前侧', 'a', '17,18 21,17 26,19 26,23 23,23 22,24 20,22 17,21'],
    ['前中', 'a', '17,20 26,20 26,23 18,23'],
    ['前空纱', 'b', '30,16 15,16 12,20 13,23 16,21 18,21 20,25 19,18'],
    ['后空纱', 'b', '15,17 27,16 19,24 16,23'],
    ['前裙', 'b', '2,13 41,13 39,28 30,24 21,21 2,21'],
    ['后中插片', 'b', '9,12 34,12 16,28 11,24'],
    ['侧缝插片', 'b', '10,18 32,11 33,30'],
    ['袖', 'b', '20,14 28,15 28,26 20,26 15,23 14,18'],
    ['袖口', 'b', '11,16 31,16 29,21 25,25 18,25 13,21'],
    ['后侧裙', 'a', '2,17 19,17 40,9 42,21 40,31 19,23 2,22'],
    ['后中裙', 'a', '2,17 22,17 38,9 40,21 39,31 22,22 2,22']
];
var sizes = [['2', '#fffaf0'], ['4', '#dda0dd'], ['6', '#00ced1']];

function drawTable() {
    var h = '<colgroup><col style="width:33px">' + '<col style="width:22px">'.repeat(22) + '</colgroup><thead><tr><th>规格</th>';
    cols.forEach(function (c) { h += '<th colspan="2"><span>' + c[0] + '</span></th>'; });
    h += '</tr></thead><tbody><tr><td class="thumb-head"></td>';
    cols.forEach(function (c) {
        h += '<td class="thumb" colspan="2"><svg><polygon fill="' + (c[1] == 'a' ? '#a0ffe0' : '#e0ffa0') + '" points="' + c[2] + '"/></svg></td>';
    });
    h += '</tr>';
    sizes.forEach(function (s) {
        h += '<tr><th style="background:' + s[1] + '">' + s[0] + '</th>';
        cols.forEach(function (c, i) { h += '<td>0</td>' + (i == 5 || i == 6 ? '<td class="none"></td>' : '<td>0</td>'); });
        h += '</tr>';
    });
    document.getElementById('sizes').innerHTML = h + '</tbody>';
}

rulers();
drawMarker();
drawTable();
```
